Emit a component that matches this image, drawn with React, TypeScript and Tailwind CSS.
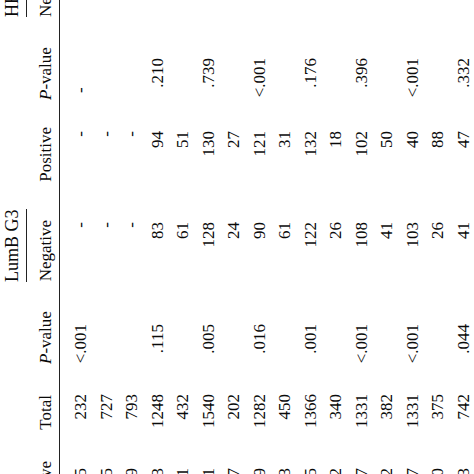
import React from "react";

type Row = { a: string; total: string; p1: string; neg: string; pos: string; p2: string };

const rows: Row[] = [
  { a: "105", total: "232", p1: "<.001", neg: "-", pos: "-", p2: "-" },
  { a: "365", total: "727", p1: "", neg: "-", pos: "-", p2: "" },
  { a: "399", total: "793", p1: "", neg: "-", pos: "-", p2: "" },
  { a: "623", total: "1248", p1: ".115", neg: "83", pos: "94", p2: ".210" },
  { a: "221", total: "432", p1: "", neg: "61", pos: "51", p2: "" },
  { a: "771", total: "1540", p1: ".005", neg: "128", pos: "130", p2: ".739" },
  { a: "107", total: "202", p1: "", neg: "24", pos: "27", p2: "" },
  { a: "639", total: "1282", p1: ".016", neg: "90", pos: "121", p2: "<.001" },
  { a: "223", total: "450", p1: "", neg: "61", pos: "31", p2: "" },
  { a: "685", total: "1366", p1: ".001", neg: "122", pos: "132", p2: ".176" },
  { a: "172", total: "340", p1: "", neg: "26", pos: "18", p2: "" },
  { a: "667", total: "1331", p1: "<.001", neg: "108", pos: "102", p2: ".396" },
  { a: "192", total: "382", p1: "", neg: "41", pos: "50", p2: "" },
  { a: "667", total: "1331", p1: "<.001", neg: "103", pos: "40", p2: "<.001" },
  { a: "190", total: "375", p1: "", neg: "26", pos: "88", p2: "" },
  { a: "373", total: "742", p1: ".044", neg: "41", pos: "47", p2: ".332" },
];

const grid = "grid grid-cols-[14px_68px_80px_94px_92px_92px_120px] w-[560px]";

function PV() {
  return (
    <span>
      <span className="italic">P</span>-value
    </span>
  );
}

export default function App() {
  return (
    <div className="w-[474px] h-[474px] overflow-hidden bg-white">
      <div className="w-[474px] h-[474px] -rotate-90 overflow-hidden bg-white text-[17px] text-[#0a0a0a] font-['Liberation_Serif','Times_New_Roman',serif]">
        {/* group header row */}
        <div className={`${grid} pt-[2px] h-[27px] leading-[20px]`}>
          <div className="col-span-3" />
          <div className="col-span-3 pl-[30px]">
            <span className="inline-block text-[18px] pb-[4px] border-b border-[#222] whitespace-nowrap">LumB G3</span>
          </div>
          <div className="pl-[17px]">
            <span className="inline-block text-[18px] pb-[4px] border-b border-[#222] whitespace-nowrap w-[120px]">HER2</span>
          </div>
        </div>
        {/* sub header row */}
        <div className={`${grid} pt-[9px] pb-[3px] leading-[20px] border-b-[1.5px] border-[#222]`}>
          <div className="flex justify-end pr-[1px] whitespace-nowrap">Positive</div>
          <div className="flex justify-end pr-[3px]">Total</div>
          <div className="flex justify-start pl-[28px] whitespace-nowrap"><PV /></div>
          <div className="flex justify-end pr-[2px]">Negative</div>
          <div className="flex justify-end pr-[1px]">Positive</div>
          <div className="flex justify-start pl-[26px] whitespace-nowrap"><PV /></div>
          <div className="flex justify-start pl-[17px] whitespace-nowrap">Negative</div>
        </div>
        {/* body */}
        <div className="pt-[8px]">
          {rows.map((r, i) => (
            <div key={i} className={`${grid} h-[25.53px] leading-[25.53px]`}>
              <div className="flex justify-end pr-[8px] whitespace-nowrap">{r.a}</div>
              <div className="flex justify-end pr-[2px]">{r.total}</div>
              <div className="flex justify-end pr-[12px]">{r.p1}</div>
              <div className="flex justify-end pr-[4px]">{r.neg}</div>
              <div className="flex justify-end pr-[5px]">{r.pos}</div>
              {r.p2 === "-" ? (
                <div className="flex justify-start pl-[33px]">-</div>
              ) : (
                <div className="flex justify-end pr-[24px]">{r.p2}</div>
              )}
              <div />
            </div>
          ))}
        </div>
      </div>
    </div>
  );
}
